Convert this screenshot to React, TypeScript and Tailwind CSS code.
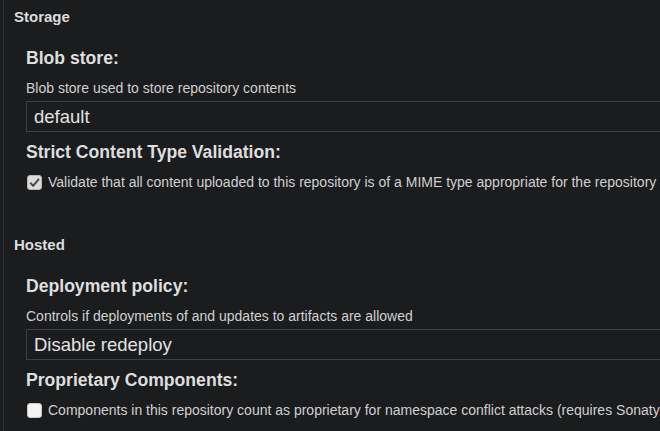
import { FC } from "react";

const Check: FC<{ checked?: boolean }> = ({ checked }) => (
  <span
    className={
      "flex items-center justify-center w-[15px] h-[15px] rounded-[3px] border shrink-0 " +
      (checked
        ? "bg-[#dcdcdc] border-[#b8b8b8]"
        : "bg-[#f4f4f4] border-[#c8c8c8]")
    }
  >
    {checked && (
      <svg width="13" height="13" viewBox="0 0 12 12">
        <path
          d="M2 6.2 L4.8 9 L10.2 2.6"
          fill="none"
          stroke="#4a4a4a"
          strokeWidth="1.8"
        />
      </svg>
    )}
  </span>
);

interface FieldProps {
  label: string;
  help?: string;
  value?: string;
  check?: { checked: boolean; text: string };
  first?: boolean;
}

const Field: FC<FieldProps> = ({ label, help, value, check, first }) => (
  <div className={first ? "mt-[19px]" : "mt-[8px]"}>
    <div className="text-[17.6px] leading-[24px] font-bold text-[#dedede] whitespace-nowrap">
      {label}
    </div>
    {help && (
      <div className="mt-[10px] text-[14px] leading-[16px] text-[#d0d0d0] whitespace-nowrap">
        {help}
      </div>
    )}
    {value && (
      <div className="mt-[5px] h-[31px] border border-[#3e3f42] pl-[7px] text-[18.5px] leading-[29px] text-[#e2e2e2] whitespace-nowrap">
        {value}
      </div>
    )}
    {check && (
      <div className="mt-[10px] flex items-center gap-[6px] h-[16px] pl-[1px] whitespace-nowrap">
        <Check checked={check.checked} />
        <span className="text-[14px] leading-[16px] text-[#d0d0d0]">
          {check.text}
        </span>
      </div>
    )}
  </div>
);

export default function App() {
  return (
    <div
      className="w-[660px] h-[431px] overflow-hidden bg-[#1b1c1e] pl-[3px]"
      style={{ fontFamily: '"Liberation Sans", Arial, sans-serif' }}
    >
      <div className="h-full border-l border-[#303134] pl-[10px]">
        <div className="pt-[7px]">
          <div className="text-[15px] leading-[20px] font-bold text-[#dcdcdc]">
            Storage
          </div>
          <div className="pl-[12px] -mr-[40px]">
            <Field
              first
              label="Blob store:"
              help="Blob store used to store repository contents"
              value="default"
            />
            <Field
              label="Strict Content Type Validation:"
              check={{
                checked: true,
                text: "Validate that all content uploaded to this repository is of a MIME type appropriate for the repository format",
              }}
            />
          </div>
        </div>
        <div className="mt-[45px]">
          <div className="text-[15px] leading-[20px] font-bold text-[#dcdcdc]">
            Hosted
          </div>
          <div className="pl-[12px] -mr-[40px]">
            <Field
              first
              label="Deployment policy:"
              help="Controls if deployments of and updates to artifacts are allowed"
              value="Disable redeploy"
            />
            <Field
              label="Proprietary Components:"
              check={{
                checked: false,
                text: "Components in this repository count as proprietary for namespace conflict attacks (requires Sonatype Nexus Firewall)",
              }}
            />
          </div>
        </div>
      </div>
    </div>
  );
}
